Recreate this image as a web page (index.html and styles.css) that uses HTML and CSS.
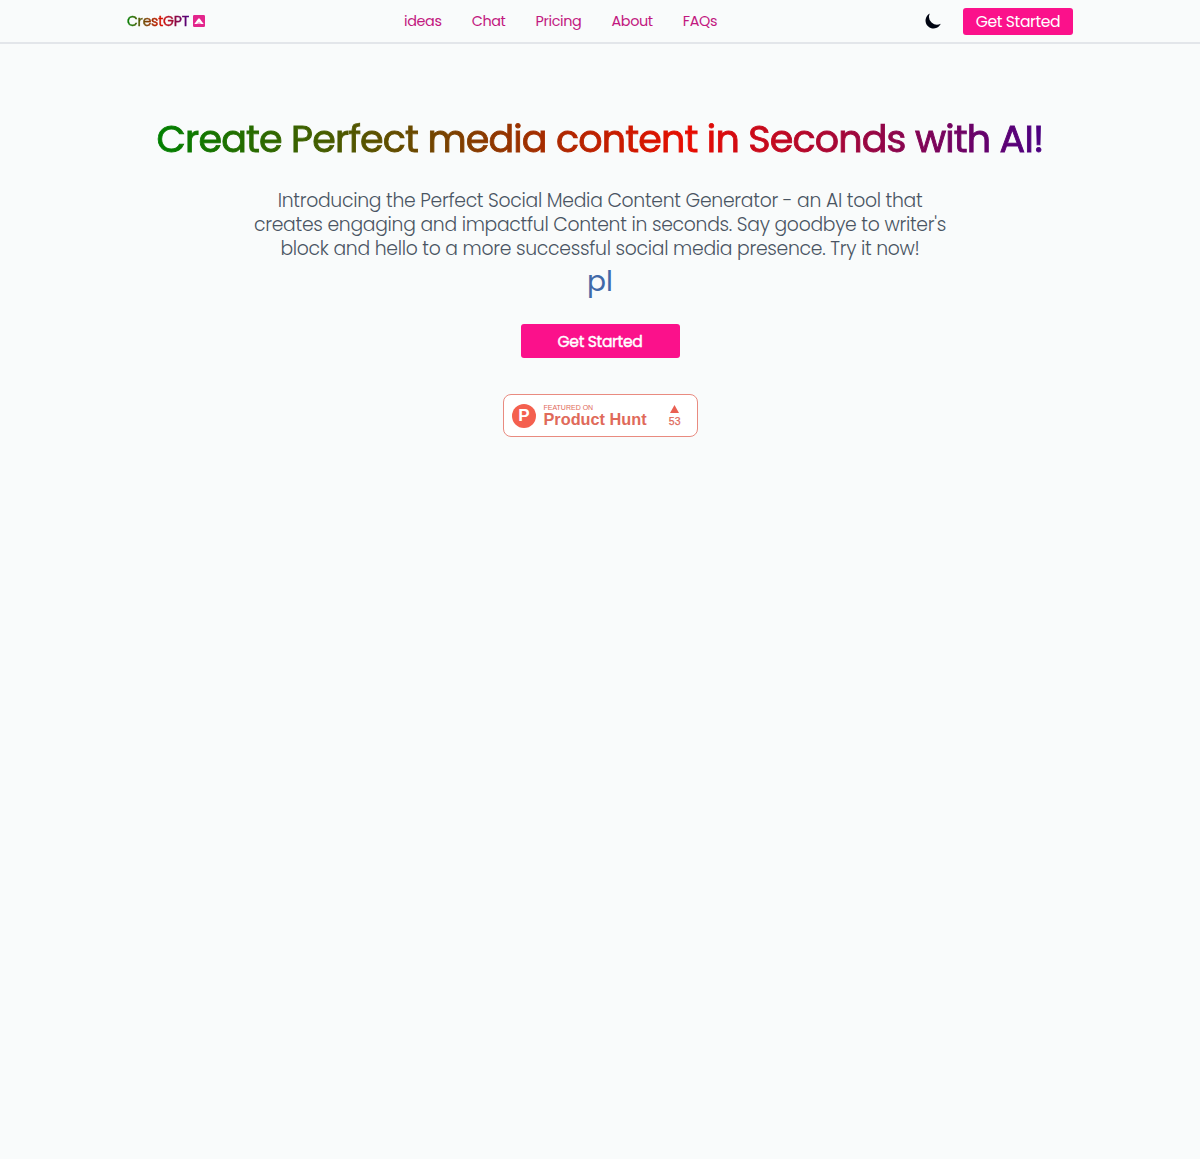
FILE: index.html
```html
<!DOCTYPE html>
<html lang="en">
<head>
<meta charset="utf-8">
<title>CrestGPT</title>
<link rel="stylesheet" href="styles.css">
</head>
<body>
<header class="header">
  <a class="logo"><span class="logo-text">CrestGPT</span><svg class="logo-icon" viewBox="0 0 12 12"><rect width="12" height="12" rx="1.2" fill="#e3268c"/><path d="M1.3 9 5.2 3.8Q6 2.8 6.8 3.8L10.7 9z" fill="#fff"/><path d="M3.6 9 6 6.8 8.4 9z" fill="#f3a4cd"/></svg></a>
  <nav class="nav"><a>ideas</a><a>Chat</a><a>Pricing</a><a>About</a><a>FAQs</a></nav>
  <div class="actions">
    <svg class="moon" viewBox="0 0 16 16"><path d="M4.8.4A8 8 0 1 0 15.8 10.8 8 8 0 0 1 4.8.4z" fill="#000411"/></svg>
    <a class="button button-small">Get Started</a>
  </div>
</header>
<main class="hero">
  <h1 class="title">Create Perfect media content in Seconds with AI!</h1>
  <p class="intro">Introducing the Perfect Social Media Content Generator - an AI tool that creates engaging and impactful Content in seconds. Say goodbye to writer's block and hello to a more successful social media presence. Try it now!</p>
  <div class="typed">pl</div>
  <a class="button button-large">Get Started</a>
  <a class="badge">
    <span class="badge-logo">P</span>
    <span class="badge-copy"><span class="badge-label">FEATURED ON</span><span class="badge-name">Product Hunt</span></span>
    <span class="badge-votes"><svg class="arrow" viewBox="0 0 9 8"><path d="M4.5 0 9 8H0z" fill="#e96053"/></svg><span>53</span></span>
  </a>
</main>
</body>
</html>
```
FILE: styles.css
```css
* { box-sizing: border-box; }
body {
  margin: 0;
  min-height: 1159px;
  background: #f9fbfb;
  font-family: Poppins, Inter, sans-serif;
}
.header {
  display: grid;
  grid-template-columns: 277px 1fr auto;
  align-items: center;
  height: 44px;
  padding: 0 127px;
  border-bottom: 2px solid #e3e6ea;
}
.logo { display: flex; align-items: center; gap: 4px; }
.logo-text {
  font-size: 14px;
  letter-spacing: -0.2px;
  font-weight: 400;
  -webkit-text-stroke: 0.4px transparent;
  background: linear-gradient(to right, green, #d81000 55%, indigo);
  -webkit-background-clip: text;
  background-clip: text;
  color: transparent;
}
.logo-icon { width: 12px; height: 12px; }
.nav { display: flex; gap: 30px; color: #c2187f; font-size: 14.4px; letter-spacing: -0.36px; }
.actions { display: flex; align-items: center; gap: 22px; }
.moon { width: 16px; height: 16px; }
.button {
  display: flex;
  align-items: center;
  justify-content: center;
  background: #fb118b;
  color: #fff;
  border-radius: 3px;
  font-size: 15.6px;
  letter-spacing: -0.39px;
}
.button-small { width: 110px; height: 27px; }
.hero { display: flex; flex-direction: column; align-items: center; }
.title {
  margin: 71px 0 0;
  font-size: 38px;
  line-height: 48px;
  letter-spacing: -0.82px;
  font-weight: 400;
  -webkit-text-stroke: 0.9px transparent;
  white-space: nowrap;
  background: linear-gradient(to right, green, #6e4700 30%, #e80c00 60%, indigo);
  -webkit-background-clip: text;
  background-clip: text;
  color: transparent;
}
.intro {
  width: 710px;
  margin: 26px 0 0;
  text-align: center;
  font-size: 18.8px;
  line-height: 24px;
  letter-spacing: -0.29px;
  font-weight: 300;
  color: #4a5563;
}
.typed { font-size: 28px; line-height: 42px; color: #4169a8; }
.button-large { width: 159px; height: 34px; margin-top: 21px; letter-spacing: -0.35px; -webkit-text-stroke: 0.4px #fff; }
.badge {
  display: flex;
  align-items: center;
  width: 195px;
  height: 43px;
  margin-top: 36px;
  padding: 0 16px 0 8px;
  border: 1px solid #e98b80;
  border-radius: 8px;
  background: #fff;
  color: #e06a5a;
  font-family: "Liberation Sans", Arial, sans-serif;
}
.badge-logo {
  display: flex;
  align-items: center;
  justify-content: center;
  width: 24px;
  height: 24px;
  margin-right: 8px;
  padding-left: 1px;
  border-radius: 50%;
  background: #f4604f;
  color: #fff;
  font-size: 17px;
  line-height: 24px;
  font-weight: 700;
}
.badge-copy { display: flex; flex-direction: column; align-items: flex-start; }
.badge-label { font-size: 7px; line-height: 8px; }
.badge-name { margin-top: -1px; font-size: 16.3px; line-height: 17px; font-weight: 700; }
.badge-votes {
  display: flex;
  flex-direction: column;
  align-items: center;
  margin-left: auto;
  gap: 3px;
  font-size: 10.5px;
  line-height: 11px;
  -webkit-text-stroke: 0.25px currentColor;
}
.arrow { width: 9px; height: 8px; }
```
